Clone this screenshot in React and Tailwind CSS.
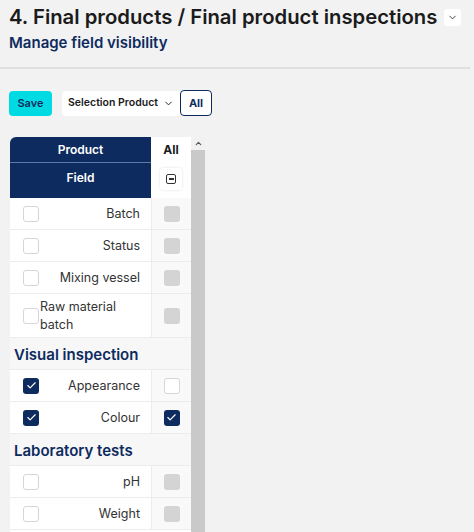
import { ChevronDown, ChevronUp, Check } from "lucide-react";

const NAVY = "bg-[#0d2b5e]";

const sections = [
  {
    rows: [
      { label: "Batch", on: false, all: "disabled" },
      { label: "Status", on: false, all: "disabled" },
      { label: "Mixing vessel", on: false, all: "disabled" },
      { label: "Raw material batch", on: false, all: "disabled", tall: true },
    ],
  },
  {
    title: "Visual inspection",
    rows: [
      { label: "Appearance", on: true, all: "off" },
      { label: "Colour", on: true, all: "on" },
    ],
  },
  {
    title: "Laboratory tests",
    rows: [
      { label: "pH", on: false, all: "disabled" },
      { label: "Weight", on: false, all: "disabled" },
    ],
  },
];

function Box({ state }) {
  if (state === "disabled") {
    return <div className="w-4 h-4 rounded-[3px] bg-[#d4d4d4] shrink-0" />;
  }
  if (state === "on") {
    return (
      <div className={`w-4 h-4 rounded-[3px] ${NAVY} shrink-0 flex items-center justify-center`}>
        <Check size={11} strokeWidth={2.5} className="text-white" />
      </div>
    );
  }
  return <div className="w-4 h-4 rounded-[3px] border border-[#d6d6d6] bg-white shrink-0" />;
}

function Row({ row }) {
  return (
    <div className={`grid grid-cols-[141px_40px] border-b border-[#ececec] ${row.tall ? "h-[44px]" : "h-[32px]"}`}>
      <div className="flex items-center pl-[13px] pr-[11px] bg-white">
        <Box state={row.on ? "on" : "off"} />
        <span className="ml-auto pl-[1px] text-[12.5px] leading-[18px] text-[#333]">{row.label}</span>
      </div>
      <div className="flex items-center justify-center bg-[#f9f9f9] border-l border-[#ececec]">
        <Box state={row.all} />
      </div>
    </div>
  );
}

export default function App() {
  return (
    <div className="w-[474px] h-[532px] overflow-hidden bg-[#f2f2f3] font-['Inter',sans-serif]">
      {/* Header */}
      <div className="flex items-center pl-[9px] pt-[4px] pr-[13px]">
        <h1 className="whitespace-nowrap text-[20.3px] leading-[26px] font-semibold text-[#1b1b1b]">
          4. Final products / Final product inspections
        </h1>
        <button className="ml-auto shrink-0 w-[17px] h-[17px] bg-white rounded-[3px] flex items-center justify-center">
          <ChevronDown size={11} strokeWidth={2} className="text-[#333]" />
        </button>
      </div>
      <div className="pl-[9px] pt-[3px] text-[15px] leading-[20px] font-semibold text-[#0d2b5e]">
        Manage field visibility
      </div>
      <div className="mt-[14px] w-[470px] h-[2px] bg-[#e0e0e0]" />

      {/* Toolbar */}
      <div className="flex items-center pl-[9px] mt-[21px]">
        <button className="w-[43px] h-[25px] rounded-[4px] bg-[#00dbe3] text-[11px] font-semibold text-[#0d2b5e]">
          Save
        </button>
        <div className="ml-[10px] flex items-center">
          <button className="h-[25px] w-[118px] bg-white rounded-l-[4px] flex items-center justify-center gap-[5px] text-[10.5px] font-semibold text-[#1b1b1b]">
            Selection Product
            <ChevronDown size={11} strokeWidth={2} />
          </button>
          <button className="h-[26px] w-[32px] bg-white border border-[#0d2b5e] rounded-[4px] text-[11px] font-bold text-[#0d2b5e]">
            All
          </button>
        </div>
      </div>

      {/* Table */}
      <div className="flex mt-[21px] ml-[10px]">
        <div className="w-[181px]">
          <div className="grid grid-cols-[141px_40px]">
            <div className={`${NAVY} rounded-tl-[6px] text-white text-[12px] font-semibold`}>
              <div className="h-[26px] flex items-center justify-center border-b border-[#5c7aa8]">Product</div>
              <div className="h-[35px] flex justify-center pt-[6px]">Field</div>
            </div>
            <div className="bg-white flex flex-col items-center">
              <div className="h-[26px] flex items-center text-[12px] font-bold text-[#1b1b1b]">All</div>
              <div className="mt-[5px] w-[22px] h-[22px] bg-white rounded-[3px] shadow-[0_0_3px_rgba(0,0,0,0.12)] flex items-center justify-center">
                <div className="w-[10px] h-[10px] border-[1.5px] border-[#333] rounded-[2px] flex items-center justify-center">
                  <div className="w-[5px] h-[1.5px] bg-[#333]" />
                </div>
              </div>
            </div>
          </div>
          {sections.map((s, i) => (
            <div key={i}>
              {s.title && (
                <div className="h-[32px] flex items-center pl-[4px] pt-[3px] bg-[#f7f7f8] border-b border-[#ececec] text-[15px] font-semibold text-[#0d2b5e]">
                  {s.title}
                </div>
              )}
              {s.rows.map((r) => (
                <Row key={r.label} row={r} />
              ))}
            </div>
          ))}
          <div className="h-[20px] bg-white" />
        </div>
        {/* Scrollbar */}
        <div className="w-[14px] flex flex-col">
          <div className="h-[13px] bg-[#f1f1f1] flex items-center justify-center">
            <ChevronUp size={9} strokeWidth={3} className="text-[#555]" />
          </div>
          <div className="flex-1 bg-[#c9c9c9]" />
        </div>
      </div>
    </div>
  );
}
